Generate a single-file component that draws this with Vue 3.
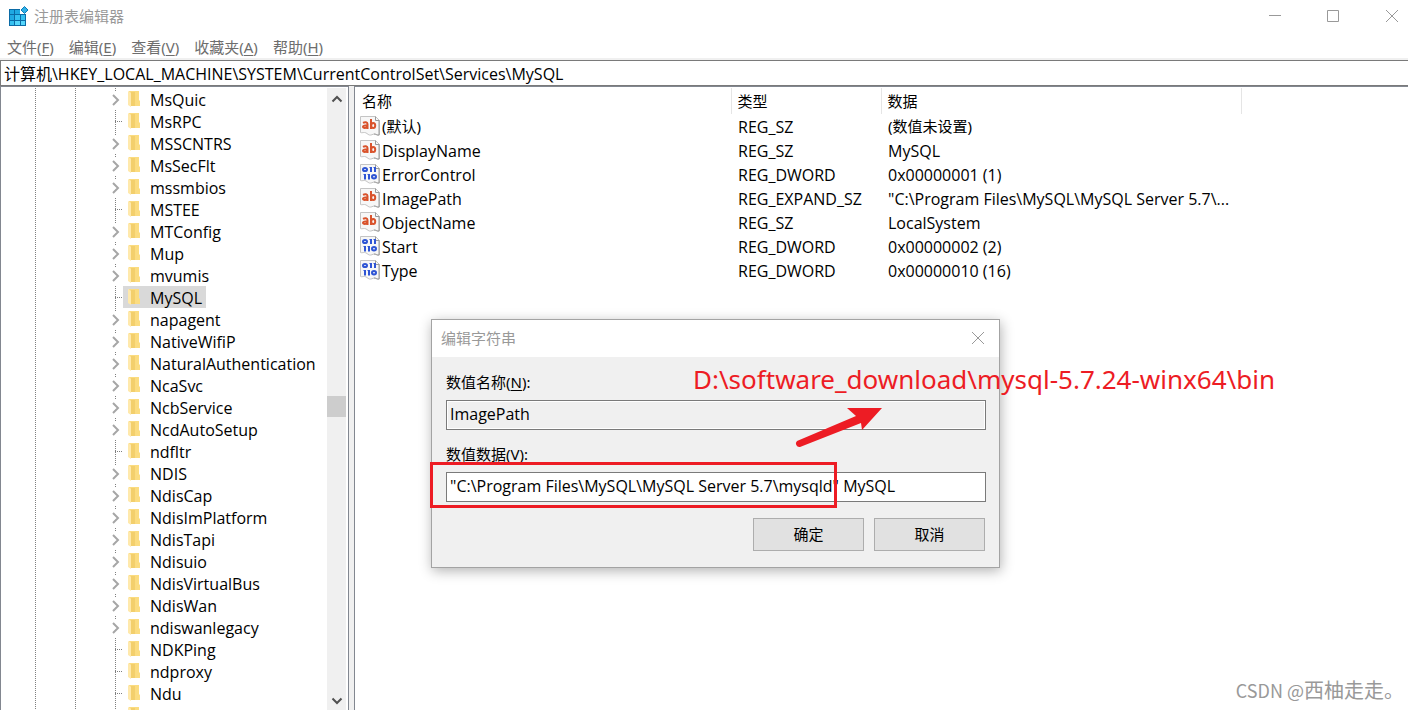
<script setup>
import { ref } from 'vue'

const menus = [
  { label: '文件', key: 'F' },
  { label: '编辑', key: 'E' },
  { label: '查看', key: 'V' },
  { label: '收藏夹', key: 'A' },
  { label: '帮助', key: 'H' }
]
const address = ref('计算机\\HKEY_LOCAL_MACHINE\\SYSTEM\\CurrentControlSet\\Services\\MySQL')
const leaves = ['MsRPC', 'MSTEE', 'MySQL', 'ndfltr', 'NDKPing', 'ndproxy', 'Ndu', 'NetAdapterCx']
const nodes = [
  'MsQuic', 'MsRPC', 'MSSCNTRS', 'MsSecFlt', 'mssmbios', 'MSTEE', 'MTConfig', 'Mup', 'mvumis',
  'MySQL', 'napagent', 'NativeWifiP', 'NaturalAuthentication', 'NcaSvc', 'NcbService',
  'NcdAutoSetup', 'ndfltr', 'NDIS', 'NdisCap', 'NdisImPlatform', 'NdisTapi', 'Ndisuio',
  'NdisVirtualBus', 'NdisWan', 'ndiswanlegacy', 'NDKPing', 'ndproxy', 'Ndu', 'NetAdapterCx'
].map((name) => ({ name, leaf: leaves.includes(name) }))
const selected = ref('MySQL')
const values = [
  { name: '(默认)', type: 'REG_SZ', data: '(数值未设置)' },
  { name: 'DisplayName', type: 'REG_SZ', data: 'MySQL' },
  { name: 'ErrorControl', type: 'REG_DWORD', data: '0x00000001 (1)' },
  { name: 'ImagePath', type: 'REG_EXPAND_SZ', data: '"C:\\Program Files\\MySQL\\MySQL Server 5.7\\...' },
  { name: 'ObjectName', type: 'REG_SZ', data: 'LocalSystem' },
  { name: 'Start', type: 'REG_DWORD', data: '0x00000002 (2)' },
  { name: 'Type', type: 'REG_DWORD', data: '0x00000010 (16)' }
]
const isLatin = (text) => /^[\x20-\x7e]*$/.test(text)
const valueName = ref('ImagePath')
const valueData = ref('"C:\\Program Files\\MySQL\\MySQL Server 5.7\\mysqld" MySQL')
</script>

<template>
  <div class="window">
    <header class="titlebar">
      <svg class="app-icon" viewBox="0 0 20 20" aria-hidden="true">
        <path d="M0 3h11v5h6v12H0z" fill="#0b6ba6" />
        <path d="M1 4h4v4H1zM6 4h5v4H6zM1 9h4v5H1z" fill="#1fa9e2" />
        <path d="M6 9h5v5H6zM12 9h4v5h-4zM1 15h4v4H1z" fill="#35c1f1" />
        <path d="M6 15h5v4H6zM12 15h4v4h-4z" fill="#55d6fb" />
        <path d="M15.500.500L19 4l-3.500 3.500L12 4z" fill="#2fb0e6" stroke="#0b7cba" />
      </svg>
      <h1>注册表编辑器</h1>
      <div class="controls">
        <button type="button" aria-label="最小化"><svg viewBox="0 0 12 12"><path d="M0 5.500h12" /></svg></button>
        <button type="button" aria-label="最大化"><svg viewBox="0 0 12 12"><path d="M.5.5h11v11H.5z" /></svg></button>
        <button type="button" aria-label="关闭"><svg viewBox="0 0 12 12"><path d="M0 0l12 12M12 0L0 12" /></svg></button>
      </div>
    </header>

    <nav class="menubar">
      <button v-for="m in menus" :key="m.key" type="button">{{ m.label }}(<u>{{ m.key }}</u>)</button>
    </nav>

    <input v-model="address" class="address latin" type="text" aria-label="地址" />

    <main class="panes">
      <section class="tree">
        <ul>
          <li v-for="n in nodes" :key="n.name" :class="{ leaf: n.leaf }">
            <span class="guide"></span>
            <span class="guide"></span>
            <span class="branch">
              <svg v-if="!n.leaf" viewBox="0 0 8 12" aria-hidden="true"><path d="M1 1l5 5-5 5" /></svg>
            </span>
            <button type="button" class="node" :class="{ selected: n.name === selected }" @click="selected = n.name">
              <svg viewBox="0 0 12 18" aria-hidden="true">
                <path d="M1 1h10v9l1 1v5H3z" fill="#fbdc80" />
                <path d="M3 2h4v14H3z" fill="#f3cf6c" />
                <path d="M0 1l3 2v14L0 15z" fill="#ffe9ac" />
              </svg>
              <span class="latin">{{ n.name }}</span>
            </button>
          </li>
        </ul>
        <div class="scrollbar">
          <svg viewBox="0 0 12 8" aria-hidden="true"><path d="M1.500 6.500L6 2l4.500 4.500" /></svg>
          <div class="track"><div class="thumb"></div></div>
          <svg viewBox="0 0 12 8" aria-hidden="true"><path d="M1.500 1.500L6 6l4.500-4.500" /></svg>
        </div>
      </section>

      <section class="list">
        <table>
          <colgroup><col class="c-name" /><col class="c-type" /><col class="c-data" /><col /></colgroup>
          <thead>
            <tr><th>名称</th><th>类型</th><th>数据</th><td></td></tr>
          </thead>
          <tbody>
            <tr v-for="v in values" :key="v.name">
              <td>
                <div class="cell">
                  <svg viewBox="0 0 20 20" aria-hidden="true">
                    <path d="M.5.500h15l4 4v14.500c-2 .8-3-1-5-1s-3 1.500-5 1-3-2.500-5-2.500-3 .5-4 0z" fill="#f7f7f7" stroke="#c4c4c4" />
                    <path d="M15.500.500v4h4" fill="none" stroke="#9a9a9a" />
                    <path d="M19 5v14c-2 .5-3-1-5-1" fill="none" stroke="#9a9a9a" />
                    <g v-if="v.type === 'REG_DWORD'" fill="none" stroke="#2f55d4" stroke-width="2">
                      <ellipse cx="5" cy="5.500" rx="2" ry="1.600" />
                      <path d="M11 3v5M15 3v5M5 10v5.500M9 10v5.500" />
                      <path d="M9.500 3.500H11M13.500 3.500H15M3.500 10.500H5M7.500 10.500H9" stroke-width="1" />
                      <ellipse cx="14" cy="12.800" rx="2" ry="1.700" />
                    </g>
                    <g v-else fill="none" stroke="#d9532c" stroke-width="2">
                      <path d="M3 6.800c2-1 4.500-.8 4.500 1.200v5M7.500 9.200c-2 0-4.500 0-4.500 1.500 0 1.800 3.500 1.600 4.500-.2M11 3v10" />
                      <ellipse cx="13.200" cy="9.400" rx="2" ry="2.500" />
                    </g>
                  </svg>
                  <span :class="{ latin: isLatin(v.name) }">{{ v.name }}</span>
                </div>
              </td>
              <td class="latin">{{ v.type }}</td>
              <td :class="{ latin: isLatin(v.data) }">{{ v.data }}</td>
              <td></td>
            </tr>
          </tbody>
        </table>
      </section>
    </main>

    <form class="dialog" role="dialog" aria-labelledby="dialog-title" @submit.prevent>
      <header>
        <h2 id="dialog-title">编辑字符串</h2>
        <button type="button" aria-label="关闭"><svg viewBox="0 0 12 12"><path d="M0 0l12 12M12 0L0 12" /></svg></button>
      </header>
      <div class="fields">
        <label for="value-name">数值名称(<u>N</u>):</label>
        <input id="value-name" v-model="valueName" class="latin" type="text" readonly />
        <label for="value-data">数值数据(<u>V</u>):</label>
        <input id="value-data" v-model="valueData" class="latin" type="text" />
        <div class="actions">
          <button type="submit">确定</button>
          <button type="button">取消</button>
        </div>
      </div>
    </form>

    <div class="mark-box"></div>
    <p class="mark-text">D:\software_download\mysql-5.7.24-winx64\bin</p>
    <svg class="mark-arrow" viewBox="0 0 88 42" aria-hidden="true">
      <path d="M2 34L61 9 52 1 87 1 67 23 66 16 5 40A3.500 3.500 0 0 1 2 34z" />
    </svg>
    <p class="watermark"><span>CSDN @</span>西柚走走。</p>
  </div>
</template>

<style>
body {
  margin: 0;
}
</style>

<style scoped>
.window {
  position: relative;
  display: flex;
  flex-direction: column;
  height: 100vh;
  overflow: hidden;
  background: #fff;
  color: #000;
  font: 15px/22px "Noto Sans", "Noto Sans CJK SC", sans-serif;
}
button,
input {
  margin: 0;
  padding: 0;
  border: 0;
  border-radius: 0;
  background: none;
  color: inherit;
  font: inherit;
}
h1,
h2,
p,
ul {
  margin: 0;
  padding: 0;
  font-weight: 400;
  font-size: 15px;
  list-style: none;
}
u {
  text-underline-offset: 2px;
}
.latin {
  font-family: "Open Sans", "Noto Sans CJK SC", sans-serif;
  font-size: 16px;
}
.titlebar {
  display: flex;
  align-items: center;
  height: 32px;
  padding-left: 9px;
  color: #999;
  flex: none;
}
.app-icon {
  width: 20px;
  height: 20px;
  margin-right: 5px;
}
.controls {
  display: flex;
  margin-left: auto;
  margin-right: -14px;
}
.controls button {
  display: flex;
  justify-content: center;
  align-items: center;
  width: 58px;
  height: 32px;
}
.controls button:last-child {
  width: 60px;
}
.controls svg,
.dialog header svg {
  width: 12px;
  height: 12px;
  fill: none;
  stroke: #999;
}
.menubar {
  display: flex;
  gap: 15px;
  height: 28px;
  padding: 4px 7px 0;
  box-sizing: border-box;
  border-bottom: 2px solid #f0f0f0;
  color: #6d6d6d;
  flex: none;
}
.address {
  height: 26px;
  padding: 0 3px 1px;
  border: 1px solid #7a7a7a;
  border-right: 0;
  box-sizing: border-box;
  flex: none;
}
.panes {
  display: flex;
  flex: 1;
  min-height: 0;
  gap: 5px;
  background: #f0f0f0;
}
.tree,
.list {
  border: solid #828790;
  border-width: 1px 0 0 1px;
  background: #fff;
  overflow: hidden;
}
.tree {
  display: flex;
  width: 349px;
  padding-top: 1px;
  border-right-width: 1px;
  box-sizing: border-box;
  flex: none;
}
.tree ul {
  flex: 1;
}
.tree li {
  display: flex;
  height: 22px;
  padding-left: 34px;
}
.guide,
.branch {
  width: 40px;
  box-sizing: border-box;
  background: repeating-linear-gradient(#808080 0 1px, transparent 1px 2px) left / 1px 100% no-repeat;
}
.branch {
  display: flex;
  align-items: flex-end;
  width: 8px;
  padding-bottom: 4px;
}
.branch svg {
  width: 8px;
  height: 12px;
  margin-left: -3px;
  background: #fff;
  box-shadow: 0 0 0 3px #fff;
  fill: none;
  stroke: #a6a6a6;
  stroke-width: 2;
  flex: none;
}
.leaf .branch {
  background:
    repeating-linear-gradient(#808080 0 1px, transparent 1px 2px) left / 1px 100% no-repeat,
    repeating-linear-gradient(90deg, #808080 0 1px, transparent 1px 2px) left / 100% 1px no-repeat;
}
.node {
  display: flex;
  align-items: center;
  gap: 10px;
  height: 22px;
  padding: 0 4px 0 5px;
}
.node .latin,
.cell .latin {
  padding-top: 2px;
}
.node.selected {
  background: #d9d9d9;
}
.node svg {
  width: 12px;
  height: 18px;
}
.scrollbar {
  display: flex;
  flex-direction: column;
  align-items: center;
  width: 19px;
  margin-right: 2px;
  padding: 7px 0 5px;
  box-sizing: border-box;
  background: #f0f0f0;
}
.scrollbar svg {
  width: 12px;
  height: 8px;
  fill: none;
  stroke: #505050;
  stroke-width: 2;
}
.track {
  display: flex;
  flex-direction: column;
  flex: 1;
  align-self: stretch;
}
.track::before {
  content: "";
  flex: 512;
}
.track::after {
  content: "";
  flex: 488;
}
.thumb {
  height: 21px;
  background: #cdcdcd;
}
.list {
  flex: 1;
  padding-top: 1px;
}
table {
  width: 100%;
  border-collapse: collapse;
  table-layout: fixed;
}
.c-name {
  width: 376px;
}
.c-type {
  width: 150px;
}
.c-data {
  width: 360px;
}
th {
  height: 26px;
  padding: 0 6px;
  border-right: 1px solid #e5e5e5;
  font-weight: 400;
  text-align: left;
}
th:first-child {
  padding-left: 7px;
}
td {
  height: 24px;
  padding: 0 7px;
  box-sizing: border-box;
  white-space: nowrap;
}
td.latin {
  padding-top: 2px;
}
td:first-child {
  padding: 0 5px;
}
.cell {
  display: flex;
  align-items: center;
  gap: 2px;
}
.cell svg {
  width: 20px;
  height: 20px;
}
.dialog {
  position: absolute;
  top: 319px;
  left: 431px;
  width: 569px;
  box-sizing: border-box;
  border: 1px solid #a3a3a3;
  background: #f0f0f0;
  box-shadow: 1px 3px 12px rgba(0, 0, 0, 0.3);
}
.dialog header {
  display: flex;
  justify-content: space-between;
  align-items: center;
  height: 37px;
  padding: 0 15px 2px 9px;
  box-sizing: border-box;
  background: #fff;
  color: #999;
}
.dialog header button {
  display: flex;
}
.fields {
  display: flex;
  flex-direction: column;
  padding: 14px 13px 16px 14px;
}
.fields label {
  height: 22px;
  margin-bottom: 7px;
}
.fields input {
  height: 30px;
  margin-bottom: 13px;
  padding: 0 3px 3px;
  border: 1px solid #7a7a7a;
  box-sizing: border-box;
}
.fields input:read-only {
  background: #f0f0f0;
  box-shadow: inset 0 0 0 1px #fff;
}
.fields #value-data {
  margin-bottom: 16px;
  background: #fff;
}
.actions {
  display: flex;
  justify-content: flex-end;
  gap: 10px;
  padding-right: 1px;
}
.actions button {
  width: 111px;
  height: 33px;
  padding-bottom: 2px;
  border: 1px solid #adadad;
  background: #e1e1e1;
}
.mark-box {
  position: absolute;
  top: 462px;
  left: 430px;
  width: 407px;
  height: 46px;
  box-sizing: border-box;
  border: 3px solid #ed1c24;
}
.mark-text {
  position: absolute;
  top: 361px;
  left: 693px;
  color: #ed1c24;
  font-size: 26px;
  line-height: 36px;
  white-space: nowrap;
}
.mark-arrow {
  position: absolute;
  top: 407px;
  left: 795px;
  width: 88px;
  height: 42px;
  fill: #ed1c24;
}
.watermark {
  position: absolute;
  right: 4px;
  bottom: 8px;
  color: #999;
  font: 20px/24px "Noto Sans CJK SC", sans-serif;
}
.watermark span {
  font-size: 18px;
}
</style>
